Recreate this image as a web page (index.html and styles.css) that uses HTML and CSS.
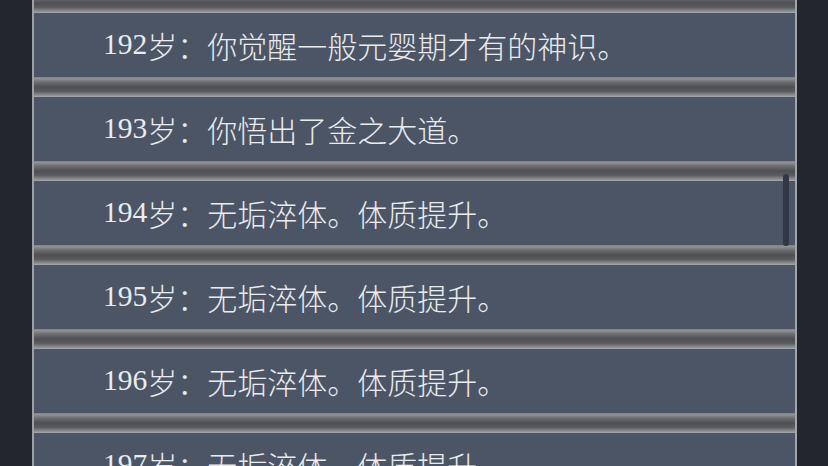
FILE: index.html
```html
<!DOCTYPE html>
<html lang="zh">
<head>
<meta charset="utf-8">
<link rel="stylesheet" href="styles.css">
</head>
<body>
<div class="panel">
  <div class="list">
    <div class="sep"></div>
    <div class="entry"><span class="age">192</span>岁：你觉醒一般元婴期才有的神识。</div>
    <div class="sep"></div>
    <div class="entry"><span class="age">193</span>岁：你悟出了金之大道。</div>
    <div class="sep"></div>
    <div class="entry"><span class="age">194</span>岁：无垢淬体。体质提升。</div>
    <div class="sep"></div>
    <div class="entry"><span class="age">195</span>岁：无垢淬体。体质提升。</div>
    <div class="sep"></div>
    <div class="entry"><span class="age">196</span>岁：无垢淬体。体质提升。</div>
    <div class="sep"></div>
    <div class="entry"><span class="age">197</span>岁：无垢淬体。体质提升。</div>
    <div class="sep"></div>
  </div>
  <div class="scrollbar"></div>
</div>
</body>
</html>
```

FILE: styles.css
```css
html, body {
  margin: 0;
  padding: 0;
  background: #22262f;
  height: 466px;
  overflow: hidden;
}
.panel {
  position: relative;
  margin-left: 32px;
  width: 761px;
  height: 466px;
  border-left: 2px solid #9c9fa4;
  border-right: 2px solid #a2a5aa;
  background: #4c5565;
  overflow: hidden;
}
.list {
  display: flex;
  flex-direction: column;
  margin-top: -7px;
}
.sep {
  height: 20px;
  flex: none;
  background: linear-gradient(to bottom,
    #7d7f83 0%,
    #909296 8%,
    #6c6e72 25%,
    #4d4f53 50%,
    #5a5c60 72%,
    #8a8c90 90%,
    #a6a8ac 100%);
}
.entry {
  height: 64px;
  flex: none;
  display: flex;
  align-items: center;
  padding-left: 69px;
  color: #e9ebef;
  font-family: "Noto Sans CJK SC", "Noto Sans", sans-serif;
  font-weight: 300;
  font-size: 30px;
  line-height: 1;
}
.age {
  font-family: "Liberation Serif", serif;
  font-weight: 400;
  font-size: 29.5px;
}
.scrollbar {
  position: absolute;
  left: 749px;
  top: 174px;
  width: 6px;
  height: 72px;
  border-radius: 3px;
  background: #323843;
}
```
